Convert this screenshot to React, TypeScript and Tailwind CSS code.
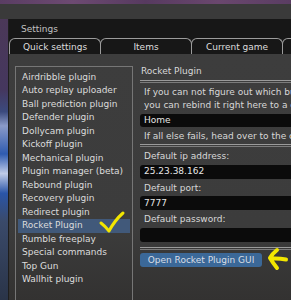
import React from "react";

const items = [
  "Airdribble plugin",
  "Auto replay uploader",
  "Ball prediction plugin",
  "Defender plugin",
  "Dollycam plugin",
  "Kickoff plugin",
  "Mechanical plugin",
  "Plugin manager (beta)",
  "Rebound plugin",
  "Recovery plugin",
  "Redirect plugin",
  "Rocket Plugin",
  "Rumble freeplay",
  "Special commands",
  "Top Gun",
  "Wallhit plugin",
];

function Sep({ className = "" }: { className?: string }) {
  return (
    <div className={"flex flex-col " + className}>
      <div className="h-px bg-[#9a9a9a]" />
      <div className="h-px" />
      <div className="h-px bg-[#7c7c7c]" />
    </div>
  );
}

function Input({ value, className = "" }: { value: string; className?: string }) {
  return (
    <div className={"h-[13.5px] leading-[13.5px] rounded-[3px] bg-[#0b0b0b] pl-[4px] text-[#e6e6e6] " + className}>
      {value}
    </div>
  );
}

function Tab({ label, first }: { label: string; first?: boolean }) {
  return (
    <div
      className={
        "w-[92px] h-[16px] shrink-0 border-t border-l border-r border-[#9c9c9c] rounded-t-[6px] flex items-center justify-center text-[#dedede] leading-[14px] " +
        (first ? "" : "-ml-px")
      }
    >
      {label}
    </div>
  );
}

export default function App() {
  return (
    <div
      className="relative w-[291px] h-[300px] overflow-hidden flex flex-col bg-[#2a2a2a] text-[9px]"
      style={{ fontFamily: "'DejaVu Sans', 'Liberation Sans', sans-serif" }}
    >
      <div className="h-[4px] shrink-0 bg-[linear-gradient(to_right,#5a3d63,#6d4a72,#573a60,#6a476e,#5a3d63)]" />
      <div className="h-[15px] shrink-0 bg-[#3a3a3a]" />
      <div className="flex flex-1 min-h-0">
        <div className="w-[8px] shrink-0 bg-[linear-gradient(to_bottom,#4b3858_0%,#45375e_25%,#3b4a7e_33%,#8a9ac8_38%,#2f5bb0_48%,#c0cce8_55%,#2a55a8_62%,#3a4a6a_72%,#2a3448_100%)]" />
        <div className="flex-1 flex flex-col min-w-0 border-l border-[#1e1e1e]">
          <div className="h-[35px] shrink-0 bg-[#171717] flex flex-col">
            <div className="h-[19px] pt-[4px] pl-[12px] leading-[13px] text-[#c2c2c2]">Settings</div>
            <div className="h-[16px] flex">
              <Tab label="Quick settings" first />
              <Tab label="Items" />
              <Tab label="Current game" />
              <Tab label="" />
            </div>
          </div>
          <div className="flex-1 min-h-0 flex gap-[7px] pl-[6px] bg-[linear-gradient(to_bottom,#3d3d3d_0%,#3c3c3c_70%,#333231_100%)]">
            <div className="mt-[12px] w-[118px] h-[260px] shrink-0 border border-[#767676] pt-[3.5px] px-[2px] text-[#dcdcdc]">
              {items.map((it) => (
                <div
                  key={it}
                  className={
                    "h-[13.5px] leading-[13.5px] pl-[4px] whitespace-nowrap " +
                    (it === "Rocket Plugin" ? "bg-[#41597a]" : "")
                  }
                >
                  {it}
                </div>
              ))}
            </div>
            <div className="mt-[10px] w-[220px] shrink-0 flex flex-col text-[#d8d8d8] whitespace-nowrap">
              <div className="h-[14px] leading-[14px] pl-[1px]">Rocket Plugin</div>
              <Sep className="mt-[2px]" />
              <div className="mt-[2.5px] h-[13px] leading-[13px] pl-[4px]">If you can not figure out which button opens the GUI,</div>
              <div className="h-[13px] leading-[13px] pl-[4px]">you can rebind it right here to a different key:</div>
              <Input value="Home" className="mt-[2px]" />
              <div className="mt-[2.5px] h-[13px] leading-[13px] pl-[4px]">If all else fails, head over to the console</div>
              <Sep className="mt-[1px]" />
              <div className="mt-[3.7px] h-[13px] leading-[13px] pl-[4px]">Default ip address:</div>
              <Input value="25.23.38.162" className="mt-[2.3px]" />
              <div className="mt-[2.8px] h-[13px] leading-[13px] pl-[4px]">Default port:</div>
              <Input value="7777" className="mt-[1.2px] h-[14px] leading-[14px]" />
              <div className="mt-[3.5px] h-[13px] leading-[13px] pl-[4px]">Default password:</div>
              <Input value="" className="mt-[1.5px] h-[14px]" />
              <Sep className="mt-[5.3px]" />
              <div className="mt-[2.4px] flex">
                <div className="h-[14.6px] leading-[14.6px] w-[122px] rounded-[3px] bg-[#3b6898] text-[#d8dee6] text-center">
                  Open Rocket Plugin GUI
                </div>
              </div>
            </div>
          </div>
        </div>
      </div>
      <svg className="pointer-events-none absolute left-0 top-0" width="291" height="300" viewBox="0 0 291 300">
        <path
          d="M101 223 Q105 226 109 231 Q115 220 123 213"
          fill="none"
          stroke="#f2e600"
          strokeWidth="3"
          strokeLinecap="round"
          strokeLinejoin="round"
        />
        <path
          d="M277 250 Q272 254 270 258 Q273 263 277 268 M271 258.5 Q279 258 286 259.5"
          fill="none"
          stroke="#f2e600"
          strokeWidth="4"
          strokeLinecap="round"
          strokeLinejoin="round"
        />
      </svg>
    </div>
  );
}
